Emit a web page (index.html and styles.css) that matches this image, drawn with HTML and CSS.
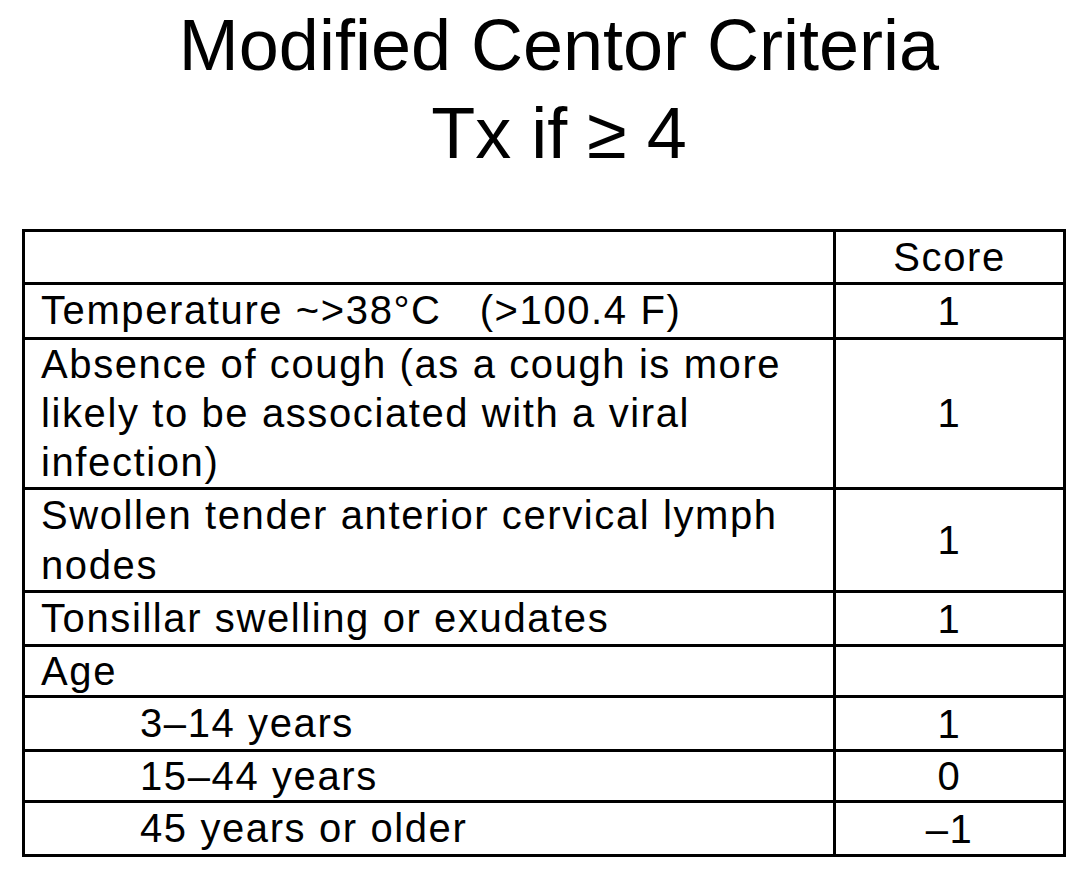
FILE: index.html
```html
<!DOCTYPE html>
<html lang="en">
<head>
<meta charset="utf-8">
<title>Modified Centor Criteria</title>
<link rel="stylesheet" href="styles.css">
</head>
<body>
<div class="slide">
  <h1 class="title">Modified Centor Criteria<br>Tx if ≥ 4</h1>
  <table class="criteria">
    <colgroup><col class="col-label"><col class="col-score"></colgroup>
    <tr><td class="label"></td><td class="score">Score</td></tr>
    <tr class="r-temp"><td class="label">Temperature ~&gt;38°C &nbsp; (&gt;100.4 F)</td><td class="score">1</td></tr>
    <tr class="r-multi"><td class="label">Absence of cough (as a cough is more<br>likely to be associated with a viral<br>infection)</td><td class="score">1</td></tr>
    <tr class="r-two"><td class="label">Swollen tender anterior cervical lymph<br>nodes</td><td class="score">1</td></tr>
    <tr class="r-tall"><td class="label">Tonsillar swelling or exudates</td><td class="score">1</td></tr>
    <tr class="r-short"><td class="label">Age</td><td class="score"></td></tr>
    <tr class="r-tall"><td class="label sub">3–14 years</td><td class="score">1</td></tr>
    <tr class="r-short"><td class="label sub">15–44 years</td><td class="score">0</td></tr>
    <tr class="r-tall"><td class="label sub">45 years or older</td><td class="score">–1</td></tr>
  </table>
</div>
</body>
</html>
```

FILE: styles.css
```css
html, body {
  margin: 0;
  padding: 0;
  background: #ffffff;
}

.slide {
  width: 1082px;
  height: 879px;
  padding-top: 1px;
  box-sizing: border-box;
  font-family: "Liberation Sans", Arial, sans-serif;
  color: #000;
}

.title {
  margin: 0 0 52px 0;
  padding-left: 36px;
  font-size: 72px;
  line-height: 88px;
  font-weight: normal;
  text-align: center;
}

.criteria {
  margin-left: 22px;
  width: 1041px;
  table-layout: fixed;
  border-collapse: collapse;
  border: 3px solid #000;
  font-size: 40px;
  line-height: 50px;
  letter-spacing: 1.6px;
}

.col-label {
  width: 811px;
}

.col-score {
  width: 230px;
}

.criteria td {
  border: 3px solid #000;
  padding: 0;
  height: 50px;
  white-space: nowrap;
}

.criteria .r-temp td {
  height: 52px;
}

.criteria .r-tall td {
  height: 51px;
}

.criteria .r-short td {
  height: 48px;
  line-height: 48px;
}

.criteria .r-multi td {
  line-height: 49px;
}

.criteria .r-two td {
  height: 100px;
  line-height: 50px;
}

.label {
  padding-left: 16px !important;
  vertical-align: top;
  text-align: left;
}

.label.sub {
  padding-left: 115px !important;
}

.score {
  text-align: center;
  vertical-align: middle;
}
```
